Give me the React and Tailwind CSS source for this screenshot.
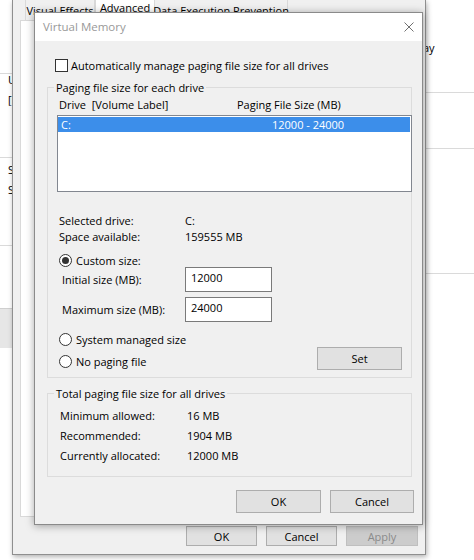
import React from "react";

function Radio({ checked }) {
  return (
    <span className="w-[13px] h-[13px] rounded-full border border-[#333333] bg-white flex items-center justify-center shrink-0">
      {checked && <span className="w-[7px] h-[7px] rounded-full bg-[#333333]" />}
    </span>
  );
}

function Btn({ children, className = "" }) {
  return (
    <div className={"flex items-center justify-center border border-[#adadad] bg-[#e1e1e1] " + className}>
      {children}
    </div>
  );
}

export default function App() {
  return (
    <div className="relative w-[474px] h-[560px] overflow-hidden bg-white font-['Open_Sans','Noto_Sans',sans-serif] text-[11px] leading-none text-black">
      {/* window behind: left sliver */}
      <div className="absolute left-0 top-0 w-[12px] h-[560px] overflow-hidden bg-white flex flex-col">
        <div className="h-[73px]" />
        <div className="h-px bg-[#dadada]" />
        <div className="h-[12px] pl-[8px] leading-[12px] whitespace-nowrap">Us</div>
        <div className="mt-[8px] h-[12px] pl-[8px] leading-[12px] whitespace-nowrap">[D</div>
        <div className="mt-[51px] h-px bg-[#dadada]" />
        <div className="mt-[6px] h-[12px] pl-[8px] leading-[12px] whitespace-nowrap">St</div>
        <div className="mt-[8px] h-[12px] pl-[8px] leading-[12px] whitespace-nowrap">Sh</div>
        <div className="mt-[49px] h-px bg-[#dadada]" />
        <div className="mt-[62px] h-px bg-[#cfcfcf]" />
        <div className="h-[39px] bg-[#e6e6e6]" />
      </div>

      {/* window behind: right sliver */}
      <div className="absolute left-[400px] top-0 w-[74px] h-[560px] overflow-hidden bg-white flex flex-col">
        <div className="h-[42px]" />
        <div className="h-[12px] pl-[23px] leading-[12px] whitespace-nowrap">ay</div>
        <div className="mt-[38px] h-px bg-[#dadada]" />
        <div className="mt-[55px] h-px bg-[#dadada]" />
        <div className="mt-[124px] h-px bg-[#dadada]" />
      </div>

      {/* Performance Options window */}
      <div className="absolute left-[12px] top-0 w-[414px] h-[555px] border-x border-b border-[#8f8f8f] bg-[#f0f0f0] shadow-[1px_2px_5px_rgba(0,0,0,0.3)] z-10">
        <div className="flex flex-col h-full px-[7px]">
          <div className="h-[20px] flex items-start pl-[5px] relative z-10">
            <div className="w-[70px] h-[20px] border-x border-[#d9d9d9] bg-[#f0f0f0] flex items-center justify-center whitespace-nowrap pt-px">Visual Effects</div>
            <div className="w-[60px] h-[21px] -mt-px border-x border-[#d9d9d9] bg-white flex items-center justify-center whitespace-nowrap pb-[4px]">Advanced</div>
            <div className="w-[133px] h-[20px] border-r border-[#d9d9d9] bg-[#f0f0f0] flex items-center justify-center whitespace-nowrap pt-px">Data Execution Prevention</div>
          </div>
          <div className="h-[497px] border border-[#d9d9d9] bg-white" />
          <div className="mt-[9px] h-[20px] flex justify-end gap-[9px]">
            <Btn className="w-[71px] h-[20px]">OK</Btn>
            <Btn className="w-[71px] h-[20px]">Cancel</Btn>
            <div className="w-[72px] h-[20px] flex items-center justify-center border border-[#bfbfbf] bg-[#cccccc] text-[#8a8a8a]">Apply</div>
          </div>
        </div>
      </div>

      {/* Virtual Memory dialog */}
      <div className="absolute left-[34px] top-[12px] w-[389px] h-[513px] border border-[#8a8a8a] bg-[#f0f0f0] shadow-[0_1px_8px_rgba(0,0,0,0.35)] z-20 flex flex-col">
        <div className="h-[28px] bg-white flex items-center justify-between pl-[8px] pr-[8px]">
          <span className="text-[11.5px] text-[#999999]">Virtual Memory</span>
          <svg width="10" height="10" viewBox="0 0 10 10" className="block">
            <path d="M0.5 0.5 L9.5 9.5 M9.5 0.5 L0.5 9.5" stroke="#707070" strokeWidth="1" fill="none" />
          </svg>
        </div>

        <div className="flex flex-col pl-[12px] pr-[10px]">
          {/* checkbox */}
          <div className="mt-[18px] h-[13px] flex items-center gap-[3px] pl-[8px]">
            <span className="w-[13px] h-[13px] border border-[#333333] bg-white shrink-0" />
            <span className="whitespace-nowrap">Automatically manage paging file size for all drives</span>
          </div>

          {/* group 1 */}
          <div className="mt-[15px] h-[291px] border border-[#dcdcdc] relative">
            <span className="absolute left-[6px] top-[-8px] px-[2px] bg-[#f0f0f0] leading-[15px] whitespace-nowrap">Paging file size for each drive</span>
            <div className="flex flex-col pl-[11px] pr-[9px]">
              <div className="mt-[9px] h-[15px] flex items-center whitespace-pre">
                <span className="w-[178px]">Drive  [Volume Label]</span>
                <span>Paging File Size (MB)</span>
              </div>
              <div className="mt-[3px] -ml-[2px] w-[355px] h-[77px] border border-[#828790] bg-white pt-px pr-px">
                <div className="h-[15px] bg-[#3c8eea] text-white flex items-center whitespace-nowrap">
                  <span className="w-[214px] pl-[3px]">C:</span>
                  <span>12000 - 24000</span>
                </div>
              </div>
              <div className="mt-[20px] h-[16px] flex items-center">
                <span className="w-[126px]">Selected drive:</span>
                <span>C:</span>
              </div>
              <div className="h-[16px] flex items-center">
                <span className="w-[126px]">Space available:</span>
                <span>159555 MB</span>
              </div>
              <div className="mt-[10px] h-[13px] flex items-center gap-[4px]">
                <Radio checked />
                <span>Custom size:</span>
              </div>
              <div className="h-[25px] flex items-center">
                <span className="w-[126px] pl-[3px]">Initial size (MB):</span>
                <div className="w-[87px] h-[25px] border border-[#7a7a7a] bg-white pl-[5px] pt-[4px] leading-[12px]">12000</div>
              </div>
              <div className="mt-[5px] h-[25px] flex items-center">
                <span className="w-[126px] pl-[3px]">Maximum size (MB):</span>
                <div className="w-[87px] h-[25px] border border-[#7a7a7a] bg-white pl-[5px] pt-[4px] leading-[12px]">24000</div>
              </div>
              <div className="mt-[11px] h-[13px] flex items-center gap-[4px]">
                <Radio />
                <span>System managed size</span>
              </div>
              <div className="mt-px h-[23px] flex items-end justify-between">
                <div className="mb-[2px] h-[13px] flex items-center gap-[4px]">
                  <Radio />
                  <span>No paging file</span>
                </div>
                <Btn className="w-[85px] h-[23px]">Set</Btn>
              </div>
            </div>
          </div>

          {/* group 2 */}
          <div className="mt-[15px] h-[84px] border border-[#dcdcdc] relative">
            <span className="absolute left-[6px] top-[-8px] px-[2px] bg-[#f0f0f0] leading-[15px] whitespace-nowrap">Total paging file size for all drives</span>
            <div className="flex flex-col pl-[12px] pt-[11px]">
              <div className="h-[20px] flex items-center">
                <span className="w-[127px]">Minimum allowed:</span>
                <span>16 MB</span>
              </div>
              <div className="h-[20px] flex items-center">
                <span className="w-[127px]">Recommended:</span>
                <span>1904 MB</span>
              </div>
              <div className="h-[20px] flex items-center">
                <span className="w-[127px]">Currently allocated:</span>
                <span>12000 MB</span>
              </div>
            </div>
          </div>

          {/* buttons */}
          <div className="mt-[13px] -mr-[2px] flex justify-end gap-[9px]">
            <Btn className="w-[85px] h-[23px]">OK</Btn>
            <Btn className="w-[84px] h-[23px]">Cancel</Btn>
          </div>
        </div>
      </div>
    </div>
  );
}
